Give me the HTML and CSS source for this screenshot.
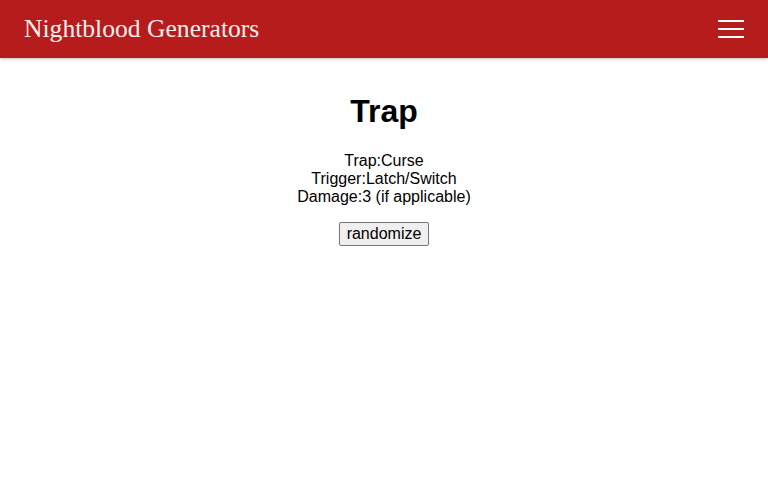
FILE: index.html
```html
<!DOCTYPE html>
<html lang="en">
<head>
<meta charset="utf-8">
<title>Trap - Nightblood Generators</title>
<link rel="stylesheet" href="styles.css">
</head>
<body>
<header class="topbar">
  <a class="brand" href="#">Nightblood Generators</a>
  <button class="menu-toggle" type="button" aria-label="Menu">
    <span class="bar"></span>
    <span class="bar"></span>
    <span class="bar"></span>
  </button>
</header>
<main class="generator">
  <h1 class="title">Trap</h1>
  <div class="result">
    <div>Trap:Curse</div>
    <div>Trigger:Latch/Switch</div>
    <div>Damage:3 (if applicable)</div>
  </div>
  <button class="randomize" type="button">randomize</button>
</main>
</body>
</html>
```

FILE: styles.css
```css
html, body {
  margin: 0;
  padding: 0;
  background: #ffffff;
}

body {
  font-family: "Liberation Sans", Arial, sans-serif;
  color: #000000;
}

.topbar {
  height: 58px;
  background: #b71c1c;
  display: flex;
  align-items: center;
  justify-content: space-between;
  padding: 0 24px;
  box-shadow: 0 1px 3px rgba(0, 0, 0, 0.25);
}

.brand {
  font-family: "Liberation Serif", "Times New Roman", serif;
  font-size: 25.6px;
  color: #f6eeee;
  text-decoration: none;
  line-height: 1;
  padding-bottom: 1px;
}

.menu-toggle {
  width: 26px;
  height: 18px;
  padding: 0;
  border: 0;
  background: transparent;
  display: flex;
  flex-direction: column;
  justify-content: space-between;
  cursor: pointer;
}

.menu-toggle .bar {
  display: block;
  height: 2px;
  width: 26px;
  background: #ffffff;
}

.generator {
  display: flex;
  flex-direction: column;
  align-items: center;
  padding-top: 14px;
  text-align: center;
}

.title {
  font-size: 32px;
  font-weight: bold;
  margin: 21px 0 22px;
}

.result {
  font-size: 16px;
  line-height: 18px;
}

.randomize {
  margin-top: 16px;
  font-family: "Liberation Sans", Arial, sans-serif;
  font-size: 16px;
  padding: 2px 7px;
  line-height: 18px;
  color: #000000;
  background: #efefef;
  border: 1px solid #767676;
  border-radius: 2px;
}
```
